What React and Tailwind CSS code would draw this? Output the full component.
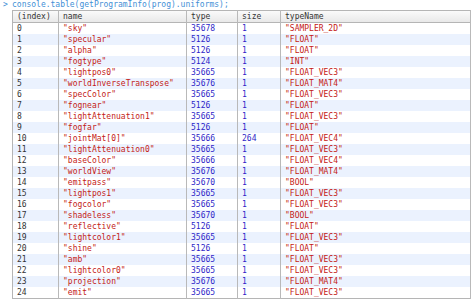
const rows = [
  ["sky", 35678, 1, "SAMPLER_2D"],
  ["specular", 5126, 1, "FLOAT"],
  ["alpha", 5126, 1, "FLOAT"],
  ["fogtype", 5124, 1, "INT"],
  ["lightpos0", 35665, 1, "FLOAT_VEC3"],
  ["worldInverseTranspose", 35676, 1, "FLOAT_MAT4"],
  ["specColor", 35665, 1, "FLOAT_VEC3"],
  ["fognear", 5126, 1, "FLOAT"],
  ["lightAttenuation1", 35665, 1, "FLOAT_VEC3"],
  ["fogfar", 5126, 1, "FLOAT"],
  ["jointMat[0]", 35666, 264, "FLOAT_VEC4"],
  ["lightAttenuation0", 35665, 1, "FLOAT_VEC3"],
  ["baseColor", 35666, 1, "FLOAT_VEC4"],
  ["worldView", 35676, 1, "FLOAT_MAT4"],
  ["emitpass", 35670, 1, "BOOL"],
  ["lightpos1", 35665, 1, "FLOAT_VEC3"],
  ["fogcolor", 35665, 1, "FLOAT_VEC3"],
  ["shadeless", 35670, 1, "BOOL"],
  ["reflective", 5126, 1, "FLOAT"],
  ["lightcolor1", 35665, 1, "FLOAT_VEC3"],
  ["shine", 5126, 1, "FLOAT"],
  ["amb", 35665, 1, "FLOAT_VEC3"],
  ["lightcolor0", 35665, 1, "FLOAT_VEC3"],
  ["projection", 35676, 1, "FLOAT_MAT4"],
  ["emit", 35665, 1, "FLOAT_VEC3"],
];

const cell = "pl-[4px] border-r border-[#b9b9b9] h-[11px] leading-[11px] whitespace-nowrap overflow-hidden";

export default function App() {
  return (
    <div className="w-[474px] h-[301px] bg-white overflow-hidden font-['DejaVu_Sans_Mono','Liberation_Mono',monospace] text-[8px]">
      {/* prompt line */}
      <div className="flex h-[10px] leading-[10px] items-center">
        <span className="w-[12px] pl-[3px] text-[#3f8fd6]">&gt;</span>
        <span className="text-[#3f8fd6]">console.table(getProgramInfo(prog).uniforms);</span>
      </div>

      <div className="pl-[12px] pr-[3px]">
        <table className="table-fixed border-collapse w-[459px] border border-[#b5b5b5]">
          <colgroup>
            <col className="w-[46px]" />
            <col className="w-[128px]" />
            <col className="w-[51px]" />
            <col className="w-[43px]" />
            <col />
          </colgroup>
          <thead>
            <tr className="bg-gradient-to-b from-[#fafafa] to-[#e9e9e9] border-b border-[#b5b5b5] text-[#333]">
              <th className={cell + " text-left font-normal"}>(index)</th>
              <th className={cell + " text-left font-normal"}>name</th>
              <th className={cell + " text-left font-normal"}>type</th>
              <th className={cell + " text-left font-normal"}>size</th>
              <th className={cell + " text-left font-normal"}>typeName</th>
            </tr>
          </thead>
          <tbody>
            {rows.map((r, i) => (
              <tr key={i} className={i % 2 === 1 ? "bg-[#ebf2fe]" : "bg-white"}>
                <td className={cell + " text-[#333]"}>{i}</td>
                <td className={cell + " text-[#c41a16]"}>"{r[0]}"</td>
                <td className={cell + " text-[#2d1fc8]"}>{r[1]}</td>
                <td className={cell + " text-[#2d1fc8]"}>{r[2]}</td>
                <td className={cell + " text-[#c41a16]"}>"{r[3]}"</td>
              </tr>
            ))}
          </tbody>
        </table>
      </div>
    </div>
  );
}
